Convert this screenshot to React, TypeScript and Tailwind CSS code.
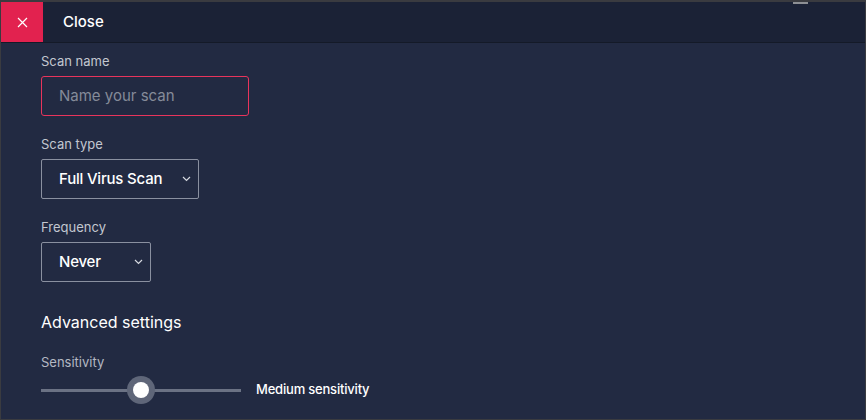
import React from "react";

const Chevron = () => (
  <svg width="9" height="6" viewBox="0 0 9 6" fill="none" className="shrink-0">
    <path d="M1 1l3.5 3.5L8 1" stroke="#d6d9e0" strokeWidth="1.2" />
  </svg>
);

const Field = ({ label, children }: { label: string; children: React.ReactNode }) => (
  <div className="flex flex-col gap-[6px]">
    <span className="text-[13px] leading-[18px] text-[#c3c7d0]">{label}</span>
    {children}
  </div>
);

const Select = ({ value, width }: { value: string; width: string }) => (
  <div
    className={`flex h-[40px] items-center justify-between rounded-[2px] border border-[#8a90a0] pl-[17px] pr-[7px] ${width}`}
  >
    <span className="text-[15px] font-medium tracking-[-0.2px] text-white">{value}</span>
    <Chevron />
  </div>
);

export default function App() {
  return (
    <div
      className="relative flex h-[420px] w-[866px] flex-col overflow-hidden border border-t-2 border-[#3a3b40] bg-[#222a42]"
      style={{ fontFamily: "Inter, 'Noto Sans', sans-serif" }}
    >
      <div className="absolute right-[57px] top-0 h-[2px] w-[15px] bg-[#8d8f94]" />

      {/* Header */}
      <div className="flex h-[41px] shrink-0 items-center border-b border-[#141a28] bg-[#1b2236]">
        <button className="flex h-full w-[42px] items-center justify-center bg-[#e2224f]">
          <svg width="11" height="11" viewBox="0 0 11 11">
            <path d="M1 1l9 9M10 1l-9 9" stroke="white" strokeWidth="1.2" />
          </svg>
        </button>
        <span className="ml-[20px] text-[15px] font-medium text-white">Close</span>
      </div>

      {/* Form */}
      <div className="flex flex-col px-[40px] pt-[9px]">
        <div className="flex flex-col gap-[19px]">
          <Field label="Scan name">
            <div className="flex h-[40px] w-[208px] items-center rounded-[3px] border border-[#e8345c] pl-[17px]">
              <span className="text-[15px] text-[#858b99]">Name your scan</span>
            </div>
          </Field>
          <Field label="Scan type">
            <Select value="Full Virus Scan" width="w-[158px]" />
          </Field>
          <Field label="Frequency">
            <Select value="Never" width="w-[110px]" />
          </Field>
        </div>

        <h2 className="mt-[28px] text-[16px] leading-[24px] text-white">Advanced settings</h2>

        <span className="mt-[19px] text-[13px] leading-[18px] text-[#b4b8c2]">Sensitivity</span>

        <div className="mt-[5px] flex h-[28px] items-center gap-[15px]">
          <div className="relative h-[28px] w-[200px]">
            <div className="absolute left-0 right-0 top-[13px] h-[3px] bg-[#6b7284]" />
            <div className="absolute left-[86px] top-0 flex h-[28px] w-[28px] items-center justify-center rounded-full bg-[#5f6679]">
              <div className="h-[16px] w-[16px] rounded-full bg-white" />
            </div>
          </div>
          <span className="text-[13px] font-medium tracking-[-0.2px] text-white">Medium sensitivity</span>
        </div>
      </div>
    </div>
  );
}
